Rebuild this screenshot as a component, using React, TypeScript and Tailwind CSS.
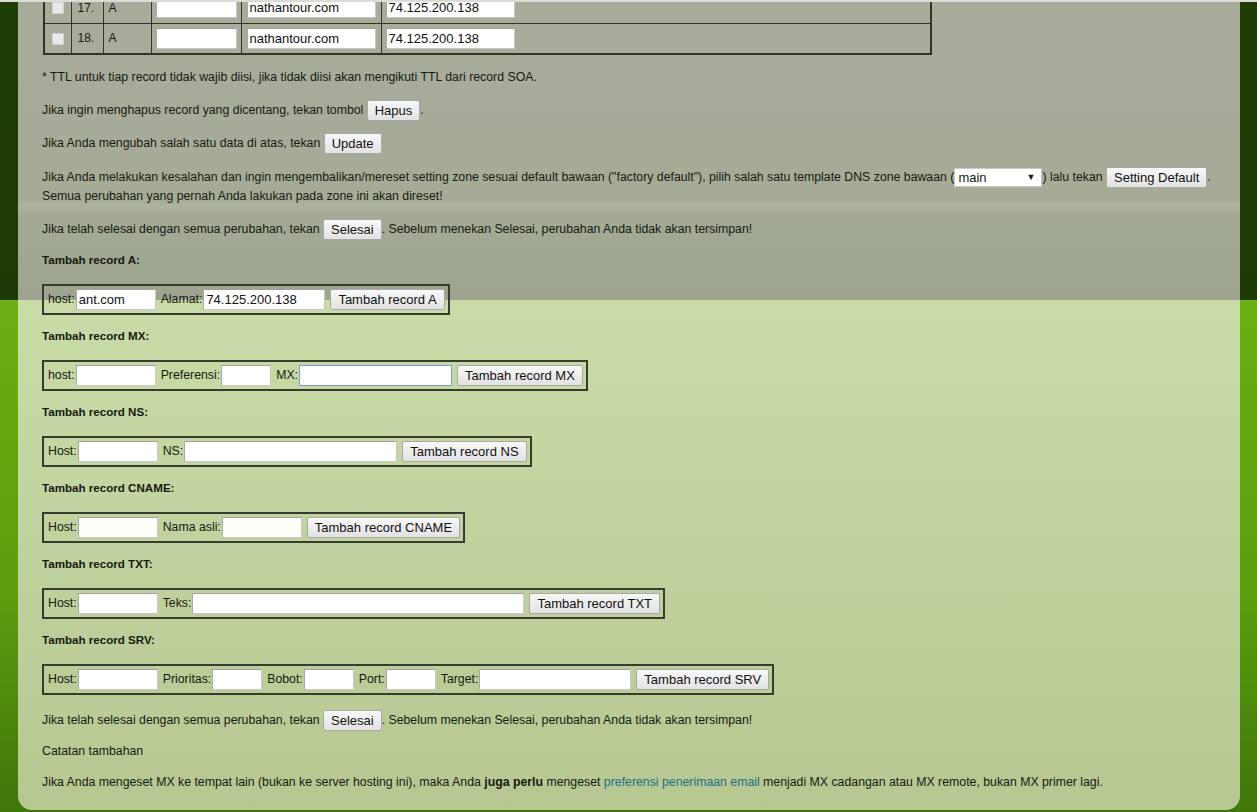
import React from 'react';

const sans = "font-['Liberation_Sans',Arial,sans-serif]";

const Btn: React.FC<{ children: React.ReactNode }> = ({ children }) => (
  <button
    className={`h-[21px] px-[7px] border border-[#a8a8a8] rounded-[2px] bg-[linear-gradient(#f8f8f8,#e2e2e2)] text-[13px] leading-none text-[#111] shrink-0 ${sans}`}
  >
    {children}
  </button>
);

const Field: React.FC<{ w: string; value?: string; focus?: boolean }> = ({ w, value, focus }) => (
  <input
    readOnly
    value={value ?? ''}
    className={`h-[21px] ${w} bg-white px-[2px] text-[13px] text-[#111] outline-none shrink-0 ${sans} ${
      focus
        ? 'border border-[#7b9ec9]'
        : 'border border-[#c8c8c8] border-t-[#a0a0a0] border-l-[#a8a8a8]'
    }`}
  />
);

// label + input pair, label sits directly against the input
const Pair: React.FC<{ label: string; w: string; value?: string; focus?: boolean }> = ({ label, w, value, focus }) => (
  <span className="flex items-center">
    <span className="text-[12.3px] pr-[1px]">{label}</span>
    <Field w={w} value={value} focus={focus} />
  </span>
);

const Box: React.FC<{ children: React.ReactNode }> = ({ children }) => (
  <div className="mt-[15px] self-start flex items-center gap-[5px] border-2 border-[#363c30] pl-[4px] pr-[3px] py-[3px]">
    {children}
  </div>
);

const Heading: React.FC<{ className?: string; children: React.ReactNode }> = ({ className = 'mt-[11px]', children }) => (
  <div className={`${className} h-[19px] leading-[19px] font-bold text-[11.6px]`}>{children}</div>
);

const Line: React.FC<{ className?: string; children: React.ReactNode }> = ({ className = 'mt-[12.5px]', children }) => (
  <div className={`${className} h-[21px] flex items-center`}>{children}</div>
);

const Row: React.FC<{ n: string; host: string; value: string }> = ({ n, host, value }) => (
  <tr>
    <td className="border border-[#2f352a] w-[27px] h-[31px] text-center align-middle">
      <span className="inline-block w-[12px] h-[12px] bg-[#e9e9e9] border border-[#cfcfcf] align-middle" />
    </td>
    <td className="border border-[#2f352a] w-[32px] pl-[6px] text-[12px]">{n}</td>
    <td className="border border-[#2f352a] w-[48px] pl-[5px] text-[12px]">A</td>
    <td className="border border-[#2f352a] w-[90px] pl-[4px]">
      <Field w="w-[81px]" />
    </td>
    <td className="border border-[#2f352a] w-[140px] pl-[5px]">
      <Field w="w-[129px]" value={host} />
    </td>
    <td className="border border-[#2f352a] w-[550px] pl-[4px]">
      <Field w="w-[129px]" value={value} />
    </td>
  </tr>
);

const App: React.FC = () => {
  return (
    <div className="w-[1257px] h-[812px] overflow-hidden bg-[linear-gradient(to_bottom,#1f3d06_0px,#1e3b05_300px,#6cae13_300px,#5c9c0e_600px,#3f760a_812px)]">
      <div className="h-[2px] bg-[#dcdcd6]" />
      <div
        className={`mx-[18px] w-[1222px] rounded-b-[14px] overflow-hidden text-[12.3px] text-[#161a12] ${sans} bg-[linear-gradient(to_bottom,#a8ac9b_0px,#a6ab98_198px,#afb4a1_204px,#a3aa95_212px,#9ca48f_298px,#c9dca8_298px,#c2d49f_500px,#b6c792_806px)]`}
      >
        <div className="flex flex-col pl-[24px] pr-[20px] pb-[18px] -mt-[11px]">
          <table className="ml-[1px] border-collapse border-2 border-[#2f352a] self-start">
            <tbody>
              <Row n="17." host="nathantour.com" value="74.125.200.138" />
              <Row n="18." host="nathantour.com" value="74.125.200.138" />
            </tbody>
          </table>

          <div className="mt-[13px] h-[19px] leading-[19px]">
            * TTL untuk tiap record tidak wajib diisi, jika tidak diisi akan mengikuti TTL dari record SOA.
          </div>

          <Line>
            <span>Jika ingin menghapus record yang dicentang, tekan tombol&nbsp;</span>
            <Btn>Hapus</Btn>
            <span>.</span>
          </Line>

          <Line>
            <span>Jika Anda mengubah salah satu data di atas, tekan&nbsp;</span>
            <Btn>Update</Btn>
          </Line>

          <div className="mt-[14px] leading-[19px]">
            <div className="flex items-center h-[19px] whitespace-nowrap">
              <span>
                Jika Anda melakukan kesalahan dan ingin mengembalikan/mereset setting zone sesuai default bawaan ("factory default"), pilih salah satu template DNS zone bawaan (
              </span>
              <span className="flex items-center justify-between h-[19px] w-[88px] bg-white border border-[#c8c8c8] pl-[3px] pr-[6px] text-[13px]">
                <span>main</span>
                <span className="text-[9px] leading-none">▼</span>
              </span>
              <span>) lalu tekan&nbsp;</span>
              <Btn>Setting Default</Btn>
              <span>.</span>
            </div>
            <div>Semua perubahan yang pernah Anda lakukan pada zone ini akan direset!</div>
          </div>

          <Line className="mt-[13px]">
            <span>Jika telah selesai dengan semua perubahan, tekan&nbsp;</span>
            <Btn>Selesai</Btn>
            <span>. Sebelum menekan Selesai, perubahan Anda tidak akan tersimpan!</span>
          </Line>

          <Heading className="mt-[10px]">Tambah record A:</Heading>
          <Box>
            <Pair label="host:" w="w-[80px]" value="ant.com" />
            <Pair label="Alamat:" w="w-[122px]" value="74.125.200.138" />
            <Btn>Tambah record A</Btn>
          </Box>

          <Heading>Tambah record MX:</Heading>
          <Box>
            <Pair label="host:" w="w-[80px]" />
            <Pair label="Preferensi:" w="w-[50px]" />
            <Pair label="MX:" w="w-[153px]" focus />
            <Btn>Tambah record MX</Btn>
          </Box>

          <Heading>Tambah record NS:</Heading>
          <Box>
            <Pair label="Host:" w="w-[80px]" />
            <Pair label="NS:" w="w-[213px]" />
            <Btn>Tambah record NS</Btn>
          </Box>

          <Heading>Tambah record CNAME:</Heading>
          <Box>
            <Pair label="Host:" w="w-[80px]" />
            <Pair label="Nama asli:" w="w-[80px]" />
            <Btn>Tambah record CNAME</Btn>
          </Box>

          <Heading>Tambah record TXT:</Heading>
          <Box>
            <Pair label="Host:" w="w-[80px]" />
            <Pair label="Teks:" w="w-[332px]" />
            <Btn>Tambah record TXT</Btn>
          </Box>

          <Heading>Tambah record SRV:</Heading>
          <Box>
            <Pair label="Host:" w="w-[80px]" />
            <Pair label="Prioritas:" w="w-[50px]" />
            <Pair label="Bobot:" w="w-[50px]" />
            <Pair label="Port:" w="w-[50px]" />
            <Pair label="Target:" w="w-[152px]" />
            <Btn>Tambah record SRV</Btn>
          </Box>

          <Line className="mt-[14.5px]">
            <span>Jika telah selesai dengan semua perubahan, tekan&nbsp;</span>
            <Btn>Selesai</Btn>
            <span>. Sebelum menekan Selesai, perubahan Anda tidak akan tersimpan!</span>
          </Line>

          <div className="mt-[11px] h-[19px] leading-[19px]">Catatan tambahan</div>

          <div className="mt-[12px] h-[19px] leading-[19px]">
            Jika Anda mengeset MX ke tempat lain (bukan ke server hosting ini), maka Anda <b>juga perlu</b> mengeset{' '}
            <a className="text-[#1d6f8c]">preferensi penerimaan email</a> menjadi MX cadangan atau MX remote, bukan MX primer lagi.
          </div>
        </div>
      </div>
    </div>
  );
};

export default App;
